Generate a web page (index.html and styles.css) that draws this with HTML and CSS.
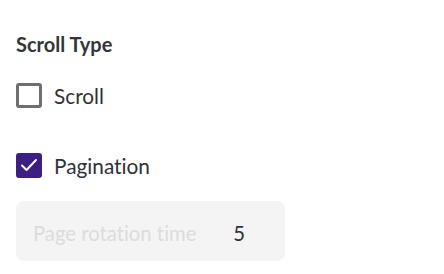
FILE: index.html
```html
<!DOCTYPE html>
<html lang="en">
<head>
    <meta charset="UTF-8">
    <meta name="viewport" content="width=device-width, initial-scale=1.0">
    <title>Scroll Type</title>
    <link rel="stylesheet" href="styles.css">
</head>
<body>
    <section class="settings">
        <h3>Scroll Type</h3>

        <label class="option">
            <span class="check"></span>
            <span>Scroll</span>
        </label>

        <label class="option checked">
            <span class="check">
                <svg width="18" height="14" viewBox="0 0 18 14">
                    <path d="M2 7.5 L6.5 12 L16 2" fill="none" stroke="#fff" stroke-width="2" stroke-linecap="round" stroke-linejoin="round"/>
                </svg>
            </span>
            <span>Pagination</span>
        </label>

        <div class="field">
            <span class="placeholder">Page rotation time</span>
            <span class="value">5</span>
        </div>
    </section>
</body>
</html>
```

FILE: styles.css
```css
* {
    box-sizing: border-box;
    margin: 0;
    padding: 0;
}

body {
    font-family: Lato, "Open Sans", sans-serif;
    font-variant-ligatures: none;
    color: #2f3237;
    background: #fff;
}

.settings {
    padding: 32px 16px 0;
}

h3 {
    font-size: 20px;
    font-weight: 700;
    line-height: 24px;
    color: #33363b;
    margin-bottom: 26px;
}

.option {
    display: flex;
    align-items: center;
    gap: 12px;
    font-size: 20.8px;
    height: 26px;
    margin-bottom: 44px;
}

.check {
    width: 26px;
    height: 25px;
    border: 3px solid #6f6f6f;
    border-radius: 3px;
    display: flex;
    align-items: center;
    justify-content: center;
}

.option.checked {
    margin-bottom: 23px;
}

.option.checked .check {
    background: #3d1e85;
    border-color: #3d1e85;
}

.field {
    width: 269px;
    height: 60px;
    background: #f4f4f4;
    border-radius: 8px;
    display: flex;
    align-items: center;
    padding: 3px 16px 0 17px;
    font-size: 20.3px;
}

.placeholder {
    color: #dcdcdc;
    flex: 1;
}

.value {
    color: #2f3237;
    margin-right: 24px;
}
```
